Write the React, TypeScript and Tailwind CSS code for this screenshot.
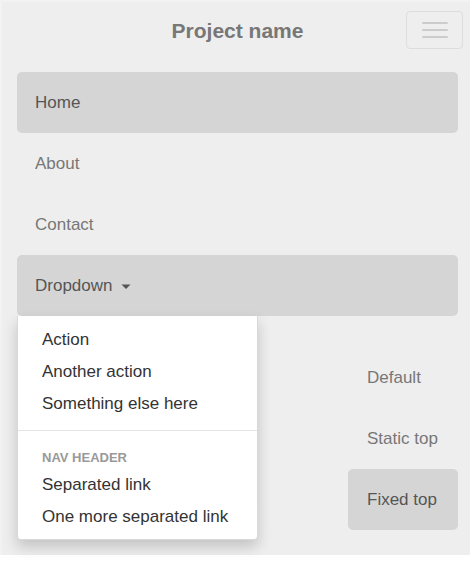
const navItems = [
    { label: "Home", active: true },
    { label: "About", active: false },
    { label: "Contact", active: false },
];

const rightItems = [
    { label: "Default", active: false },
    { label: "Static top", active: false },
    { label: "Fixed top", active: true },
];

const menuTop = ["Action", "Another action", "Something else here"];
const menuBottom = ["Separated link", "One more separated link"];

const App = () => {
    return (
        <div
            className="w-[474px] h-[580px] bg-white"
            style={{ fontFamily: '"Liberation Sans", Arial, sans-serif' }}
        >
            <div className="w-[470px] h-[555px] bg-[#eeeeee] pl-[15px] pr-[12px] border-t-2 border-l-2 border-[#f2f2f2]">
                {/* Header */}
                <div className="relative flex items-center justify-center h-[58px]">
                    <span className="text-[21px] font-bold text-[#777777] leading-none mt-[-2px]">
                        Project name
                    </span>
                    <button className="absolute right-[-5px] top-[9px] w-[57px] h-[38px] border border-[#dddddd] rounded-[4px] flex flex-col items-center justify-center gap-[5px]">
                        <span className="block w-[26px] h-[2px] bg-[#cccccc] rounded-[1px]" />
                        <span className="block w-[26px] h-[2px] bg-[#cccccc] rounded-[1px]" />
                        <span className="block w-[26px] h-[2px] bg-[#cccccc] rounded-[1px]" />
                    </button>
                </div>

                {/* Main nav */}
                <ul className="mt-[12px] text-[17px]">
                    {navItems.map((item) => (
                        <li
                            key={item.label}
                            className={`h-[61px] flex items-center px-[18px] rounded-[5px] ${item.active ? "bg-[#d5d5d5] text-[#555555]" : "text-[#777777]"}`}
                        >
                            {item.label}
                        </li>
                    ))}
                    <li className="relative">
                        <div className="h-[61px] flex items-center px-[18px] rounded-[5px] bg-[#d5d5d5] text-[#555555]">
                            Dropdown
                            <svg width="10" height="6" viewBox="0 0 10 6" className="ml-[8px] mt-[2px]">
                                <path d="M0.5 0.5 L9.5 0.5 L5 5 Z" fill="#555555" />
                            </svg>
                        </div>

                        {/* Dropdown menu */}
                        <div className="absolute left-0 top-[61px] z-10 w-[241px] bg-white border border-[rgba(0,0,0,0.15)] border-t-0 rounded-b-[4px] shadow-[0_7px_14px_rgba(0,0,0,0.18)] pt-[8px] pb-[6px]">
                            {menuTop.map((m) => (
                                <div key={m} className="h-[32px] flex items-center px-[24px] text-[#333333]">
                                    {m}
                                </div>
                            ))}
                            <div className="h-px bg-[#e5e5e5] my-[10px]" />
                            <div className="pt-[9px] pb-[4px] px-[24px] text-[13px] leading-[15px] font-bold text-[#999999]">
                                NAV HEADER
                            </div>
                            {menuBottom.map((m) => (
                                <div key={m} className="h-[32px] flex items-center px-[24px] text-[#333333]">
                                    {m}
                                </div>
                            ))}
                        </div>
                    </li>
                </ul>

                {/* Right nav */}
                <ul className="mt-[31px] ml-auto w-[110px] text-[17px]">
                    {rightItems.map((item) => (
                        <li
                            key={item.label}
                            className={`h-[61px] flex items-center px-[19px] rounded-[5px] ${item.active ? "bg-[#d5d5d5] text-[#555555]" : "text-[#777777]"}`}
                        >
                            {item.label}
                        </li>
                    ))}
                </ul>
            </div>
        </div>
    );
};

export default App;
